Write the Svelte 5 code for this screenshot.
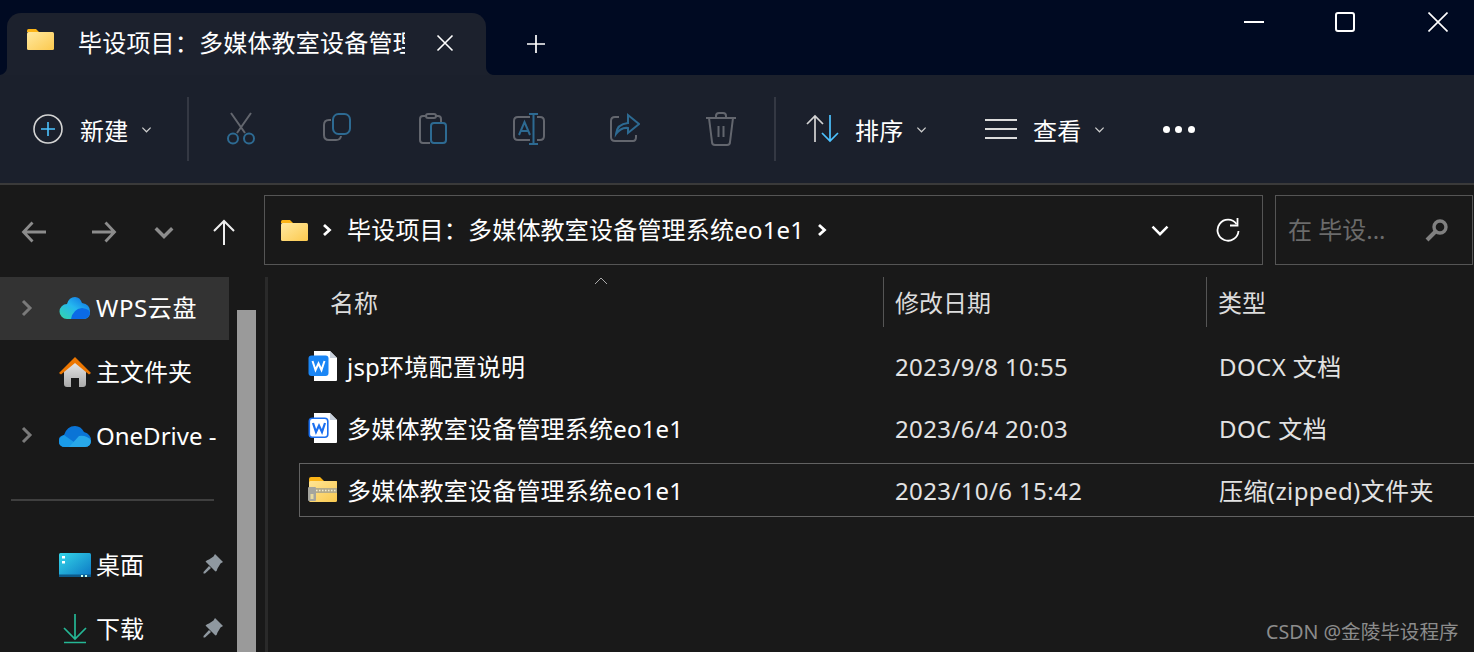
<script>
  const files = [
    { name: 'jsp环境配置说明', date: '2023/9/8 10:55', type: 'DOCX 文档', icon: 'docx' },
    { name: '多媒体教室设备管理系统eo1e1', date: '2023/6/4 20:03', type: 'DOC 文档', icon: 'doc' },
    { name: '多媒体教室设备管理系统eo1e1', date: '2023/10/6 15:42', type: '压缩(zipped)文件夹', icon: 'zip', selected: true },
  ];
</script>

{#snippet folder(w, h)}
  <svg width={w} height={h} viewBox="0 0 28 22">
    <defs>
      <linearGradient id="fg" x1="0" y1="0" x2="1" y2="1">
        <stop offset="0" stop-color="#ffe9a0" />
        <stop offset="1" stop-color="#fcc94e" />
      </linearGradient>
    </defs>
    <path d="M1 2.500Q1 1 2.500 1H10l3 3H1Z" fill="#fbb417" />
    <rect x="1" y="4" width="27" height="18" rx="1.500" fill="url(#fg)" />
  </svg>
{/snippet}

{#snippet chevron(w, color, sw)}
  <svg width={w} height={w} viewBox="0 0 12 12" fill="none" stroke={color} stroke-width={sw}>
    <path d="M1.500 4L6 8.500L10.500 4" />
  </svg>
{/snippet}

{#snippet pin()}
  <svg class="pin" width="22" height="22" viewBox="0 0 22 22" fill="#8f98a0">
    <path d="M13 1L21 9L18.500 10.500L15.500 15.500Q15 18 13.500 18.500L3.500 8.500Q5 7 7 6.500L11.500 3.500Z" />
    <path d="M7 13L1.500 19L1.500 20.500L3 20.500L9 15Z" />
  </svg>
{/snippet}

<div class="window">
  <header class="titlebar">
    <div class="tab">
      <span class="tab-folder">{@render folder(28, 22)}</span>
      <span class="tab-title">毕设项目：多媒体教室设备管理系统eo1e1</span>
      <svg class="tab-close" width="18" height="18" viewBox="0 0 18 18" stroke="#fff" stroke-width="1.600"><path d="M1.500 1.500L16.500 16.500M16.500 1.500L1.500 16.500" /></svg>
    </div>
    <svg class="new-tab" width="20" height="20" viewBox="0 0 20 20" stroke="#fff" stroke-width="1.700"><path d="M10 1V19M1 10H19" /></svg>
    <div class="win-controls">
      <svg width="20" height="20" viewBox="0 0 20 20" stroke="#fff" stroke-width="2"><path d="M0 10H20" /></svg>
      <svg width="20" height="20" viewBox="0 0 20 20" fill="none" stroke="#fff" stroke-width="2"><rect x="1" y="1" width="18" height="18" rx="2" /></svg>
      <svg width="20" height="20" viewBox="0 0 20 20" stroke="#fff" stroke-width="1.600"><path d="M0.500 0.500L19.500 19.500M19.500 0.500L0.500 19.500" /></svg>
    </div>
  </header>

  <div class="commandbar">
    <div class="cmd new">
      <svg width="32" height="32" viewBox="0 0 32 32" fill="none">
        <circle cx="16" cy="16" r="14" stroke="#d4d4d4" stroke-width="1.600" />
        <path d="M16 9V23M9 16H23" stroke="#4cc2ff" stroke-width="1.600" />
      </svg>
      <span class="cmd-label">新建</span>
      {@render chevron(11, '#cfcfcf', 1.300)}
    </div>
    <div class="sep"></div>
    <div class="dim-icons">
      <div class="dim"><svg width="30" height="34" viewBox="0 0 30 34" fill="none" stroke-width="2">
        <path d="M5 1L19 21M25 1L11 21" stroke="#63666e" />
        <circle cx="7" cy="26.500" r="5" stroke="#2d6a92" /><circle cx="23" cy="26.500" r="5" stroke="#2d6a92" />
      </svg></div>
      <div class="dim"><svg width="30" height="30" viewBox="0 0 30 30" fill="none" stroke-width="2">
        <path d="M9 8H7Q2 8 2 13V23Q2 28 7 28H14Q18.500 28 19 24" stroke="#63666e" />
        <rect x="11" y="2" width="17" height="20" rx="5.500" stroke="#2d6a92" />
      </svg></div>
      <div class="dim"><svg width="30" height="34" viewBox="0 0 30 34" fill="none" stroke-width="2">
        <path d="M8 4H5Q2 4 2 7V28Q2 31 5 31H12M18 4H20Q23 4 23 7V10" stroke="#63666e" />
        <rect x="8" y="2" width="10" height="4" rx="2" stroke="#63666e" />
        <rect x="13" y="11" width="15" height="20" rx="3" stroke="#2d6a92" />
      </svg></div>
      <div class="dim"><svg width="32" height="34" viewBox="0 0 32 34" fill="none" stroke-width="2">
        <path d="M17 5H5Q1 5 1 9V24Q1 28 5 28H17M24 5H27Q31 5 31 9V24Q31 28 27 28H24" stroke="#63666e" />
        <path d="M6 23L11.500 10L17 23M8 19H15" stroke="#2d6a92" />
        <path d="M16 2H25M20.500 2V32M16 32H25" stroke="#2d6a92" />
      </svg></div>
      <div class="dim"><svg width="30" height="32" viewBox="0 0 30 32" fill="none" stroke-width="2">
        <path d="M9 5H5Q1 5 1 9V25Q1 29 5 29H23Q26 29 26 25V23" stroke="#63666e" />
        <path d="M6 22Q7 12 18 11V3L29 12L18 21V16Q11 15 6 22Z" stroke="#2d6a92" />
      </svg></div>
      <div class="dim"><svg width="30" height="34" viewBox="0 0 30 34" fill="none" stroke="#63666e" stroke-width="2">
        <path d="M0 6H30M10 6V4Q10 1 13 1H17Q20 1 20 4V6M3 6L6 30Q6 33 9 33H21Q24 33 24 30L27 6M12.500 14V25M17.500 14V25" />
      </svg></div>
    </div>
    <div class="sep"></div>
    <div class="cmd sort">
      <svg width="34" height="30" viewBox="0 0 34 30" fill="none" stroke-width="1.700">
        <path d="M9 28V2M1 10L9 2L17 10" stroke="#d4d4d4" />
        <path d="M24 1V27M16 19L24 27L32 19" stroke="#4cc2ff" />
      </svg>
      <span class="cmd-label">排序</span>
      {@render chevron(11, '#cfcfcf', 1.300)}
    </div>
    <div class="cmd view">
      <svg width="32" height="22" viewBox="0 0 32 22" stroke="#dcdcdc" stroke-width="1.800">
        <path d="M0 2H32M0 11H32M0 20H32" />
      </svg>
      <span class="cmd-label">查看</span>
      {@render chevron(11, '#cfcfcf', 1.300)}
    </div>
    <div class="dots"><i></i><i></i><i></i></div>
  </div>

  <div class="navrow">
    <div class="nav-buttons">
      <svg width="26" height="24" viewBox="0 0 26 24" fill="none" stroke="#8c8c8c" stroke-width="2.800"><path d="M25 12H2.500M11.500 2.500L2.500 12L11.500 21.500" /></svg>
      <svg class="fwd" width="26" height="24" viewBox="0 0 26 24" fill="none" stroke="#8c8c8c" stroke-width="2.800"><path d="M1 12H23.500M14.500 2.500L23.500 12L14.500 21.500" /></svg>
      <span class="recent">{@render chevron(22, '#8c8c8c', 1.900)}</span>
      <svg class="up" width="24" height="26" viewBox="0 0 24 26" fill="none" stroke="#eee" stroke-width="2"><path d="M12 26V2M2 12L12 2L22 12" /></svg>
    </div>
    <div class="address">
      {@render folder(28, 22)}
      <svg class="crumb" width="10" height="14" viewBox="0 0 10 14" fill="none" stroke="#fff" stroke-width="2.800"><path d="M2 2L7.500 7L2 12" /></svg>
      <span class="crumb-text">毕设项目：多媒体教室设备管理系统eo1e1</span>
      <svg class="crumb" width="10" height="14" viewBox="0 0 10 14" fill="none" stroke="#fff" stroke-width="2.800"><path d="M2 2L7.500 7L2 12" /></svg>
      <span class="spacer"></span>
      <span class="addr-down">{@render chevron(20, '#fff', 1.500)}</span>
      <svg width="24" height="24" viewBox="0 0 24 24" fill="none" stroke="#fff" stroke-width="1.800">
        <path d="M20.500 6A10.500 10.500 0 1 0 22.500 13" /><path d="M21.500 0V7.500H14" />
      </svg>
    </div>
    <div class="search">
      <span>在 毕设...</span>
      <svg width="24" height="24" viewBox="0 0 24 24" fill="none" stroke="#808080">
        <circle cx="15" cy="9" r="6" stroke-width="3.400" /><path d="M10.500 13.500L2 22" stroke-width="4" />
      </svg>
    </div>
  </div>

  <div class="main">
    <nav class="sidebar">
      <div class="side-item active">
        <svg class="exp" width="12" height="18" viewBox="0 0 12 18" fill="none" stroke="#7a7a7a" stroke-width="3"><path d="M2 2L9 9L2 16" /></svg>
        <svg class="side-icon" width="32" height="24" viewBox="0 0 32 24">
          <defs><linearGradient id="wps" x1="0" y1="1" x2="1" y2="0"><stop offset="0" stop-color="#35d8a8" /><stop offset="0.500" stop-color="#25b7ef" /><stop offset="1" stop-color="#0a63e0" /></linearGradient></defs>
          <path d="M8 23A7.500 7.500 0 0 1 8 8Q10 1 16 1Q21 1 23 7Q31 8 31 15.500Q31 23 24 23Z" fill="url(#wps)" />
          <path d="M12 23Q14 13 23 12Q31 13 31 17Q30 23 24 23Z" fill="#0b6be6" />
        </svg>
        <span class="wps">WPS云盘</span>
      </div>
      <div class="side-item">
        <svg class="side-icon" width="32" height="30" viewBox="0 0 32 30">
          <defs><linearGradient id="hm" x1="0" y1="0" x2="0" y2="1"><stop offset="0" stop-color="#ececec" /><stop offset="1" stop-color="#a9a9a9" /></linearGradient></defs>
          <path d="M5 13L16 3L27 13V27Q27 30 24 30H20V21H12V30H8Q5 30 5 27Z" fill="url(#hm)" />
          <path d="M0 16L16 0L32 16L30 17.500L16 6L2 17.500Z" fill="#ec7600" />
        </svg>
        <span>主文件夹</span>
      </div>
      <div class="side-item">
        <svg class="exp" width="12" height="18" viewBox="0 0 12 18" fill="none" stroke="#7a7a7a" stroke-width="3"><path d="M2 2L9 9L2 16" /></svg>
        <svg class="side-icon" width="32" height="21" viewBox="0 0 32 21">
          <path d="M6 21A6 6 0 0 1 5 9Q8 0 16 0Q22 0 25 6Q32 8 32 14.500Q32 21 26 21Z" fill="#0a74d6" />
          <path d="M6 21Q0 21 0 15Q0 11 5 9L22 21Z" fill="#1a9be8" />
          <path d="M10 21L20 10Q28 9 32 14.500Q32 21 26 21Z" fill="#28a8ea" />
        </svg>
        <span>OneDrive -</span>
      </div>
      <div class="side-divider"></div>
      <div class="side-item lower">
        <svg class="side-icon" width="32" height="24" viewBox="0 0 32 24">
          <defs><linearGradient id="dk" x1="0" y1="0" x2="1" y2="1"><stop offset="0" stop-color="#35d6e8" /><stop offset="1" stop-color="#0b76c4" /></linearGradient></defs>
          <rect width="32" height="24" rx="1.500" fill="url(#dk)" />
          <rect y="21.500" width="32" height="2.500" fill="#0d5a8a" />
          <rect x="3" y="3" width="3" height="2.500" fill="#fff" /><rect x="3" y="8" width="3" height="2.500" fill="#fff" />
          <rect x="22" y="22" width="2" height="2" fill="#cfe" /><rect x="26" y="22" width="2" height="2" fill="#cfe" />
        </svg>
        <span>桌面</span>
        {@render pin()}
      </div>
      <div class="side-item lower">
        <svg class="side-icon" width="32" height="30" viewBox="0 0 32 30" fill="none" stroke="#25b795" stroke-width="1.700">
          <path d="M16 0V24M5 14L16 25L27 14M5 28.500H27" />
        </svg>
        <span>下载</span>
        {@render pin()}
      </div>
    </nav>
    <div class="scrollbar"><div class="thumb"></div></div>
    <div class="split"></div>

    <section class="list">
      <div class="list-head">
        <div class="col col-name">名称
          <svg class="caret" width="14" height="8" viewBox="0 0 14 8" fill="none" stroke="#aaa" stroke-width="1"><path d="M1 7L7 1L13 7" /></svg>
        </div>
        <div class="col col-date">修改日期</div>
        <div class="col col-type">类型</div>
      </div>
      {#each files as f}
        <div class="row" class:selected={f.selected}>
          <div class="row-name">
            {#if f.icon === 'zip'}
              <svg width="30" height="26" viewBox="0 0 30 26">
                <defs><linearGradient id="zp" x1="0" y1="0" x2="1" y2="1"><stop offset="0" stop-color="#ffe595" /><stop offset="1" stop-color="#f9c950" /></linearGradient></defs>
                <path d="M1 2Q1 0 3 0H12L16 4H29V8H1Z" fill="#fbb417" />
                <rect x="1" y="4" width="28" height="21" rx="1.500" fill="url(#zp)" />
                <rect x="8" y="11" width="21" height="5" fill="#b4ab8a" />
                <path d="M8 13.500H29" stroke="#f2ecd2" stroke-width="1.500" stroke-dasharray="1.500 1.500" />
                <rect x="0" y="10" width="8" height="14" rx="1" fill="#a5a59e" />
                <rect x="2.500" y="17" width="3" height="5" fill="#e6d9a0" />
              </svg>
            {:else}
              <svg width="30" height="32" viewBox="0 0 30 32">
                <path d="M6 1H22L29 8V30Q29 31 28 31H6Z" fill="#fff" />
                <path d="M22 1L29 8H22Z" fill="#c8d0dc" />
                {#if f.icon === 'docx'}
                  <rect x="0.500" y="5.500" width="20" height="20.500" rx="3" fill="#1a86f5" />
                  <path d="M4.500 11L7.500 20L10.500 13.500L13.500 20L16.500 11" fill="none" stroke="#fff" stroke-width="2" />
                {:else}
                  <rect x="1.300" y="6.300" width="18.500" height="19" rx="3" fill="#fff" stroke="#1a6ff0" stroke-width="1.600" />
                  <path d="M5 11L8 20L11 13.500L14 20L17 11" fill="none" stroke="#1a6ff0" stroke-width="2.200" />
                {/if}
              </svg>
            {/if}
            <span>{f.name}</span>
          </div>
          <div class="row-date">{f.date}</div>
          <div class="row-type">{f.type}</div>
        </div>
      {/each}
    </section>
  </div>

  <div class="watermark">CSDN @金陵毕设程序</div>
</div>

<style>
  :global(body) {
    margin: 0;
    background: #191919;
  }
  .window {
    position: relative;
    width: 1474px;
    height: 652px;
    overflow: hidden;
    display: flex;
    flex-direction: column;
    background: #191919;
    color: #fff;
    font-family: "Noto Sans", "Noto Sans CJK SC", sans-serif;
    font-size: 24px;
    line-height: 32px;
  }
  svg {
    display: block;
    flex: none;
  }

  .titlebar {
    height: 62px;
    padding: 13px 26px 0 7px;
    display: flex;
    align-items: flex-start;
    background: #000a22;
    flex: none;
  }
  .tab {
    position: relative;
    width: 479px;
    height: 62px;
    border-radius: 14px 14px 0 0;
    background: #1c212d;
    display: flex;
    align-items: center;
    padding-bottom: 2px;
    box-sizing: border-box;
  }
  .tab::before,
  .tab::after {
    content: '';
    position: absolute;
    bottom: 0;
    width: 8px;
    height: 8px;
  }
  .tab::before {
    left: -8px;
    background: radial-gradient(circle at 0 0, #000a22 7.500px, #1c212d 8.500px);
  }
  .tab::after {
    right: -8px;
    background: radial-gradient(circle at 100% 0, #000a22 7.500px, #1c212d 8.500px);
  }
  .tab-folder {
    margin: 0 0 8px 19px;
  }
  .tab-title {
    width: 327px;
    margin-left: 24px;
    overflow: hidden;
    white-space: nowrap;
    letter-spacing: 0.2px;
  }
  .tab-close {
    margin-left: 31px;
  }
  .new-tab {
    margin: 21px 0 0 40px;
  }
  .win-controls {
    margin-left: auto;
    margin-top: -1px;
    display: flex;
    gap: 71px;
  }
  .win-controls svg:last-child {
    margin-left: 2px;
  }

  .commandbar {
    height: 108px;
    display: flex;
    align-items: center;
    background: #1b202c;
    border-bottom: 2px solid #3a3a3a;
    padding-left: 32px;
    flex: none;
  }
  .cmd {
    display: flex;
    align-items: center;
  }
  .cmd-label {
    margin: 0 12px 0 16px;
    padding-top: 4px;
    letter-spacing: 0.3px;
  }
  .cmd.new {
    width: 155px;
  }
  .sep {
    width: 2px;
    height: 64px;
    background: #343843;
    flex: none;
  }
  .dim-icons {
    display: flex;
    margin-left: 4px;
  }
  .dim {
    width: 96px;
    display: flex;
    justify-content: center;
  }
  .dim-icons + .sep {
    margin-left: 5px;
  }
  .cmd.sort {
    margin-left: 30px;
    width: 179px;
  }
  .sort .cmd-label {
    margin-left: 15px;
  }
  .dots {
    display: flex;
    gap: 5.500px;
    margin-left: 58px;
  }
  .dots i {
    width: 7px;
    height: 7px;
    border-radius: 50%;
    background: #fff;
  }

  .navrow {
    height: 92px;
    display: flex;
    align-items: center;
    padding-top: 2px;
    box-sizing: border-box;
    flex: none;
  }
  .nav-buttons {
    width: 264px;
    padding-left: 21px;
    box-sizing: border-box;
    display: flex;
    align-items: center;
  }
  .fwd {
    margin-left: 44px;
  }
  .recent {
    margin-left: 36px;
  }
  .up {
    margin-left: 37px;
  }
  .address {
    width: 999px;
    height: 70px;
    box-sizing: border-box;
    border: 1px solid #555;
    display: flex;
    align-items: center;
    padding: 0 22px 0 15px;
    margin-bottom: 5px;
  }
  .crumb {
    margin-left: 14px;
  }
  .crumb-text {
    margin-left: 15px;
    white-space: nowrap;
    width: 456px;
    letter-spacing: 0.2px;
  }
  .spacer {
    flex: 1;
  }
  .addr-down {
    margin-right: 46px;
  }
  .search {
    margin-left: 12px;
    width: 198px;
    height: 70px;
    box-sizing: border-box;
    border: 1px solid #555;
    margin-bottom: 5px;
    padding: 0 23px 0 12px;
    display: flex;
    align-items: center;
    justify-content: space-between;
    color: #6b6b6b;
  }

  .main {
    flex: 1;
    display: flex;
    min-height: 0;
  }
  .sidebar {
    width: 229px;
    flex: none;
  }
  .side-item {
    position: relative;
    height: 64px;
    display: flex;
    align-items: center;
    padding-left: 59px;
    box-sizing: border-box;
    color: #fff;
    white-space: nowrap;
  }
  .side-item span {
    margin-left: 5px;
  }
  .side-item.active {
    height: 63px;
    background: #333;
    padding-bottom: 1px;
  }
  .side-item .wps {
    letter-spacing: 0.6px;
  }
  .side-item.lower {
    padding-top: 2px;
  }
  .exp {
    position: absolute;
    left: 21px;
    top: 22px;
  }
  .side-divider {
    height: 2px;
    margin: 31px 15px 31px 11px;
    background: #3f3f3f;
  }
  .pin {
    position: absolute;
    left: 202px;
    top: 21px;
  }
  .scrollbar {
    width: 19px;
    margin-left: 8px;
    flex: none;
  }
  .thumb {
    margin-top: 33px;
    height: 100%;
    background: #9a9a9a;
  }
  .split {
    width: 3px;
    margin-left: 9px;
    background: #2a2a2a;
    flex: none;
  }
  .list {
    flex: 1;
    min-width: 0;
    padding-left: 31px;
    position: relative;
  }
  .list-head {
    height: 50px;
    display: flex;
    color: #dcdcdc;
    margin-bottom: 12px;
  }
  .col {
    position: relative;
    box-sizing: border-box;
    line-height: 52px;
  }
  .col-name {
    width: 585px;
    padding-left: 31px;
    border-right: 1px solid #555;
  }
  .col-date {
    width: 323px;
    padding-left: 11px;
    border-right: 1px solid #555;
  }
  .col-type {
    padding-left: 11px;
  }
  .caret {
    position: absolute;
    left: 295px;
    top: 0;
  }
  .row {
    height: 54px;
    margin-bottom: 8px;
    display: flex;
    align-items: center;
    border: 1px solid transparent;
    box-sizing: border-box;
  }
  .row.selected {
    border-color: #626262;
    border-right: 0;
  }
  .row-name {
    width: 595px;
    display: flex;
    align-items: center;
    padding-left: 8px;
    box-sizing: border-box;
    gap: 9px;
    white-space: nowrap;
  }
  .row-name span {
    padding-top: 2px;
    letter-spacing: 0.2px;
  }
  .row-date {
    width: 324px;
    padding-top: 2px;
    color: #e2e2e2;
    letter-spacing: 0.38px;
  }
  .row-type {
    padding-top: 2px;
    color: #e2e2e2;
    white-space: nowrap;
    letter-spacing: 0.4px;
  }
  .watermark {
    position: absolute;
    left: 1266px;
    top: 619px;
    font-size: 19.600px;
    line-height: 26px;
    color: #8c8c8c;
    white-space: nowrap;
  }
</style>
